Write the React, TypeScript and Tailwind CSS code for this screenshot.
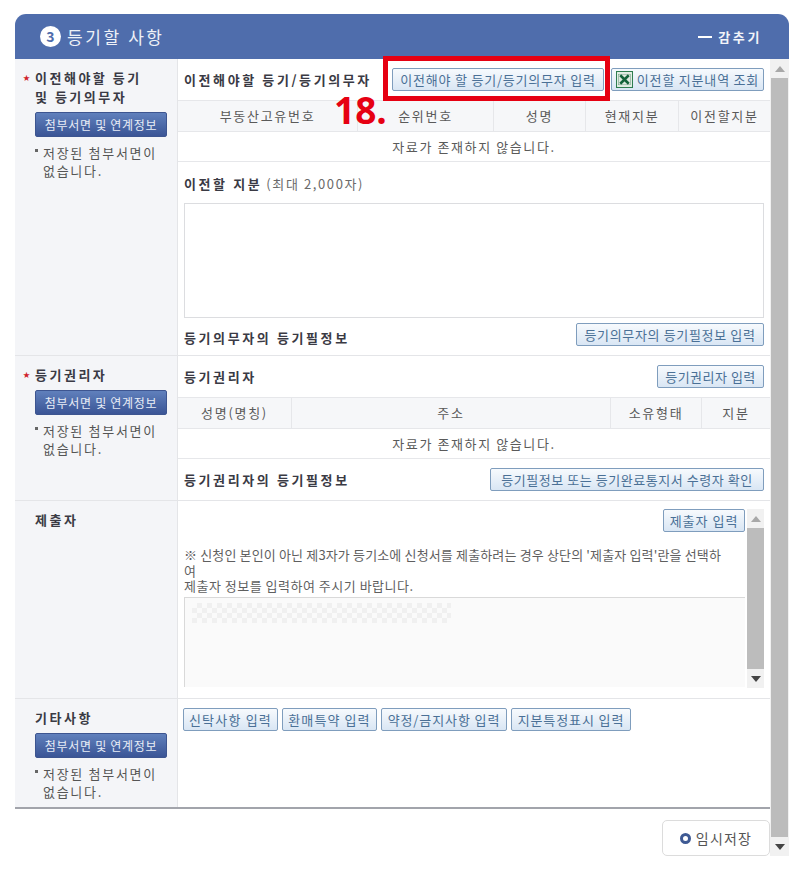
import React from "react";

function ActionButton({ children, className = "" }: { children: React.ReactNode; className?: string }) {
  return (
    <button className={"h-[23px] shrink-0 rounded-[2px] border border-[#7f9dbd] bg-gradient-to-b from-[#f7fafd] to-[#d9e6f4] text-[13px] leading-[20px] text-[#4a7096] whitespace-nowrap flex items-center justify-center " + className}>
      {children}
    </button>
  );
}

function Side({ star, lines, attach }: { star?: boolean; lines: string[]; attach?: boolean }) {
  return (
    <div className="w-[163px] shrink-0 bg-[#f4f5f8] border-r border-[#e4e5e8] pt-[9px] pl-[20px] pr-[10px]">
      <div className="relative text-[13px] leading-[19px] font-bold text-[#3a3a44] tracking-[2.5px]">
        {star && <span className="absolute left-[-12px] top-[0px] text-[#d0202a] text-[7px]">★</span>}
        {lines.map((l) => (
          <div key={l} className="whitespace-nowrap">{l}</div>
        ))}
      </div>
      {attach && (
        <>
          <button className="mt-[6px] h-[25px] w-[132px] rounded-[2px] border border-[#3d5590] bg-gradient-to-b from-[#6080bc] to-[#3b5596] text-[12px] tracking-[0.7px] text-[#e8edf6] whitespace-nowrap flex items-center justify-center">
            첨부서면 및 연계정보
          </button>
          <div className="mt-[7px] flex text-[13px] leading-[18px] text-[#555]">
            <span className="mt-[5px] mr-[5px] h-[3px] w-[3px] shrink-0 bg-[#666]" />
            <span className="tracking-[1.7px] whitespace-nowrap">저장된 첨부서면이<br />없습니다.</span>
          </div>
        </>
      )}
    </div>
  );
}

function Heading({ children }: { children: React.ReactNode }) {
  return <span className="text-[13px] font-bold text-[#3a3a44] tracking-[2.6px] whitespace-nowrap">{children}</span>;
}

function HeadRow({ cols, h }: { cols: [string, string][]; h: string }) {
  return (
    <div className={"flex border-y border-[#e6e7ea] bg-[#f6f7f9] text-[13px] text-[#5a5a5a] " + h}>
      {cols.map(([t, w], i) => (
        <div key={t} className={"flex items-center justify-center tracking-[1.7px] " + w + (i < cols.length - 1 ? " border-r border-[#e6e7ea]" : "")}>{t}</div>
      ))}
    </div>
  );
}

function Empty({ h }: { h: string }) {
  return (
    <div className={"flex items-center justify-center border-b border-[#e6e7ea] text-[13px] text-[#5a5a5a] tracking-[1.6px] " + h}>
      자료가 존재하지 않습니다.
    </div>
  );
}

function Arrow({ up }: { up?: boolean }) {
  return (
    <svg width="10" height="6" viewBox="0 0 10 6" className="block">
      <path d={up ? "M5 0 L10 6 L0 6 Z" : "M0 0 L10 0 L5 6 Z"} fill={up ? "#a8a8a8" : "#444"} />
    </svg>
  );
}

function ExcelIcon() {
  return (
    <svg width="17" height="17" viewBox="0 0 16 16" className="mr-[4px] shrink-0">
      <rect x="0.5" y="0.5" width="15" height="15" fill="#eef5ee" stroke="#2f7d4f" />
      <rect x="2.5" y="3" width="11" height="10" fill="#dfe9df" stroke="#7aa58a" strokeWidth="0.6" />
      <path d="M4 4 L12 12 M12 4 L4 12" stroke="#14633a" strokeWidth="2.4" />
    </svg>
  );
}

export default function App() {
  return (
    <div
      className="relative w-[800px] h-[872px] overflow-hidden bg-white pt-[14px] pl-[15px]"
      style={{ fontFamily: '"Noto Sans CJK KR", "Noto Sans", sans-serif' }}
    >
      <div className="w-[774px]">
        {/* header */}
        <div className="h-[45px] rounded-t-[11px] bg-[#4f6dac] flex items-center justify-between pl-[25px] pr-[27px]">
          <div className="flex items-center">
            <span className="h-[21px] w-[21px] rounded-full bg-white flex items-center justify-center text-[14px] font-bold text-[#4f6dac]">3</span>
            <span className="ml-[6px] text-[17px] text-[#eef1f7] tracking-[2.6px]">등기할 사항</span>
          </div>
          <div className="flex items-center">
            <span className="h-[2px] w-[14px] bg-white mr-[6px]" />
            <span className="text-[13px] font-bold text-[#f2f4f9] tracking-[2.6px]">감추기</span>
          </div>
        </div>

        <div className="flex">
          <div className="w-[755px] shrink-0">
            {/* row 1 */}
            <div className="flex h-[297px] border-b border-[#e4e5e8]">
              <Side star lines={["이전해야할 등기", "및 등기의무자"]} attach />
              <div className="flex-1 min-w-0">
                <div className="h-[41px] px-[6px] flex items-center">
                  <Heading>이전해야할 등기/등기의무자</Heading>
                  <div className="flex-1" />
                  <ActionButton className="w-[212px] tracking-[0.8px]">이전해야 할 등기/등기의무자 입력</ActionButton>
                  <ActionButton className="w-[153px] ml-[7px] tracking-[0.8px]"><ExcelIcon />이전할 지분내역 조회</ActionButton>
                </div>
                <HeadRow
                  h="h-[32px]"
                  cols={[["부동산고유번호", "w-[180px]"], ["순위번호", "w-[136px]"], ["성명", "w-[92px]"], ["현재지분", "w-[93px]"], ["이전할지분", "flex-1"]]}
                />
                <Empty h="h-[30px]" />
                <div className="px-[6px]">
                  <div className="mt-[12px] h-[20px] flex items-center">
                    <Heading>이전할 지분</Heading>
                    <span className="ml-[4px] text-[13px] text-[#6a6a6a] tracking-[1.6px]">(최대 2,000자)</span>
                  </div>
                  <div className="mt-[9px] h-[115px] border border-[#dcdde0] bg-white" />
                  <div className="mt-[5px] flex items-start justify-between">
                    <div className="pt-[5px] h-[23px] leading-[20px] text-[13px]"><Heading>등기의무자의 등기필정보</Heading></div>
                    <ActionButton className="w-[188px] tracking-[0.65px]">등기의무자의 등기필정보 입력</ActionButton>
                  </div>
                </div>
              </div>
            </div>

            {/* row 2 */}
            <div className="flex h-[145px] border-b border-[#e4e5e8]">
              <Side star lines={["등기권리자"]} attach />
              <div className="flex-1 min-w-0">
                <div className="h-[41px] px-[6px] flex items-center justify-between">
                  <Heading>등기권리자</Heading>
                  <ActionButton className="w-[107px] tracking-[0.5px]">등기권리자 입력</ActionButton>
                </div>
                <HeadRow
                  h="h-[32px]"
                  cols={[["성명(명칭)", "w-[114px]"], ["주소", "w-[319px]"], ["소유형태", "w-[91px]"], ["지분", "flex-1"]]}
                />
                <Empty h="h-[30px]" />
                <div className="h-[41px] px-[6px] flex items-center justify-between">
                  <Heading>등기권리자의 등기필정보</Heading>
                  <ActionButton className="w-[274px] tracking-[0.55px]">등기필정보 또는 등기완료통지서 수령자 확인</ActionButton>
                </div>
              </div>
            </div>

            {/* row 3 */}
            <div className="flex h-[198px] border-b border-[#e4e5e8]">
              <Side lines={["제출자"]} />
              <div className="flex-1 min-w-0 pt-[8px] pl-[6px] pr-[6px] flex">
                <div className="w-[561px] shrink-0">
                  <div className="flex justify-end">
                    <ActionButton className="w-[82px] tracking-[1px]">제출자 입력</ActionButton>
                  </div>
                  <div className="mt-[15px] text-[13px] leading-[15.5px] text-[#5f5f5f]">
                    <div className="whitespace-nowrap tracking-[0.15px]">※ 신청인 본인이 아닌 제3자가 등기소에 신청서를 제출하려는 경우 상단의 '제출자 입력'란을 선택하</div>
                    <div>여</div>
                    <div className="whitespace-nowrap tracking-[0.5px]">제출자 정보를 입력하여 주시기 바랍니다.</div>
                  </div>
                  <div className="mt-[3px] h-[90px] border-t border-l border-[#d9d9d9] bg-[#fafafa] pt-[5px] pl-[7px]">
                    <div
                      className="h-[20px] w-[259px] opacity-70"
                      style={{ backgroundImage: "repeating-conic-gradient(#ececec 0 25%, #fafafa 0 50%)", backgroundSize: "10px 10px" }}
                    />
                  </div>
                </div>
                <div className="ml-[2px] w-[17px] h-[179px] bg-[#f1f1f1] flex flex-col items-center">
                  <div className="h-[19px] flex items-center"><Arrow up /></div>
                  <div className="w-full flex-1 bg-[#bcbcbc]" />
                  <div className="h-[19px] flex items-center"><Arrow /></div>
                </div>
              </div>
            </div>

            {/* row 4 */}
            <div className="flex h-[110px] border-b-2 border-[#a2a4ab]">
              <Side lines={["기타사항"]} attach />
              <div className="flex-1 pt-[9px] pl-[5px] flex items-start gap-[4px]">
                <ActionButton className="w-[95px] tracking-[1.2px]">신탁사항 입력</ActionButton>
                <ActionButton className="w-[95px] tracking-[1.1px]">환매특약 입력</ActionButton>
                <ActionButton className="w-[126px] tracking-[0.9px]">약정/금지사항 입력</ActionButton>
                <ActionButton className="w-[120px] tracking-[0.9px]">지분특정표시 입력</ActionButton>
              </div>
            </div>

            {/* footer */}
            <div className="flex justify-end pt-[11px]">
              <button className="h-[36px] w-[108px] rounded-[5px] border border-[#dcdcdc] bg-white flex items-center justify-center text-[14px] text-[#555] tracking-[1.2px]">
                <span className="mr-[5px] h-[11px] w-[11px] rounded-full border-[3px] border-[#3f5a94]" />
                임시저장
              </button>
            </div>
          </div>

          {/* outer scrollbar */}
          <div className="w-[19px] h-[797px] bg-[#f1f1f1] flex flex-col items-center">
            <div className="h-[19px] flex items-center"><Arrow up /></div>
            <div className="w-[17px] flex-1 bg-[#bcbcbc]" />
            <div className="h-[19px] flex items-center"><Arrow /></div>
          </div>
        </div>
      </div>

      {/* annotation over the page */}
      <div className="absolute left-[383px] top-[56px] h-[45px] w-[227px] border-[5px] border-[#e60012]" />
      <div
        className="absolute left-[334px] top-[86px] text-[37px] leading-[48px] font-bold text-[#e60012]"
        style={{ fontFamily: '"Open Sans", sans-serif' }}
      >
        18.
      </div>
    </div>
  );
}
